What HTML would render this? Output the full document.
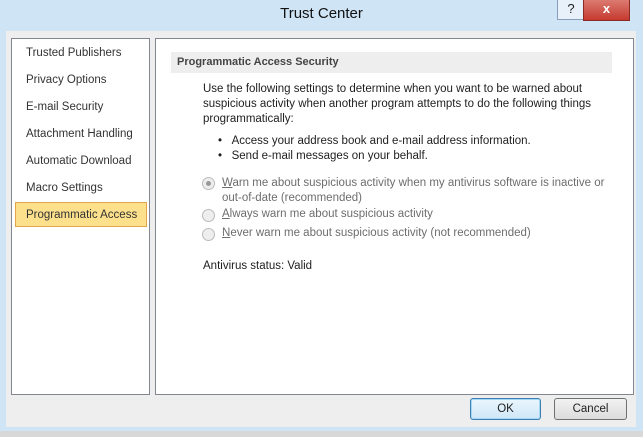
<!DOCTYPE html><html><head><style>
body{margin:0;width:643px;height:437px;overflow:hidden;background:#dcdcdc;font-family:"Liberation Sans",sans-serif;font-size:11.5px;color:#1e1e1e;position:relative}
.a{position:absolute}
</style></head><body>
<div class="a" style="left:0;top:0;width:643px;height:431px;background:#cfe4f5;border-bottom:1px solid #555"></div>
<div class="a" style="left:0;top:431px;width:643px;height:6px;background:#d8d8d8"></div>
<div class="a" style="left:0;top:5px;width:643px;text-align:center;font-size:15px;color:#111">Trust Center</div>
<div class="a" style="left:557px;top:0;width:26px;height:19px;border:1px solid #8aa0b8;border-top:0;background:#e8f1fa;text-align:center;font-size:13px;line-height:18px">?</div>
<div class="a" style="left:583px;top:0;width:45px;height:20px;background:linear-gradient(#dc7a70,#c53a30);border:1px solid #8a2a24;border-top:0;color:#fff;text-align:center;font-weight:bold;font-size:13px;line-height:18px">x</div>
<div class="a" style="left:6px;top:31px;width:630px;height:396px;background:#eeeeee"></div>
<div class="a" style="left:11px;top:38px;width:137px;height:355px;background:#fff;border:1px solid #828790"></div>
<div class="a" style="left:155px;top:38px;width:477px;height:355px;background:#fff;border:1px solid #828790"></div>
<div class="a" style="left:15px;top:202px;width:130px;height:23px;background:#fde08c;border:1px solid #e3a54a"></div>
<div class="a" style="left:26px;top:40px;line-height:27px;color:#333">Trusted Publishers<br>Privacy Options<br>E-mail Security<br>Attachment Handling<br>Automatic Download<br>Macro Settings<br>Programmatic Access</div>
<div class="a" style="left:171px;top:52px;width:441px;height:21px;background:#eeeeee;font-weight:bold;color:#444;line-height:21px;padding-left:6px;box-sizing:border-box;font-size:11px">Programmatic Access Security</div>
<div class="a" style="left:203px;top:82px;line-height:15px">Use the following settings to determine when you want to be warned about<br>suspicious activity when another program attempts to do the following things<br>programmatically:</div>
<div class="a" style="left:218px;top:134px;line-height:15px">•&nbsp;&nbsp;&nbsp;Access your address book and e-mail address information.<br>•&nbsp;&nbsp;&nbsp;Send e-mail messages on your behalf.</div>
<div class="a" style="left:222px;top:176px;line-height:15px;color:#6d6d6d"><u>W</u>arn me about suspicious activity when my antivirus software is inactive or<br>out-of-date (recommended)</div>
<div class="a" style="left:222px;top:208px;color:#6d6d6d"><u>A</u>lways warn me about suspicious activity</div>
<div class="a" style="left:222px;top:227px;color:#6d6d6d"><u>N</u>ever warn me about suspicious activity (not recommended)</div>
<div class="a" style="left:202px;top:177px;width:11px;height:11px;border-radius:50%;border:1px solid #bbb;background:#eee"><div class="a" style="left:3px;top:3px;width:5px;height:5px;border-radius:50%;background:#999"></div></div>
<div class="a" style="left:202px;top:209px;width:11px;height:11px;border-radius:50%;border:1px solid #bbb;background:#eee"></div>
<div class="a" style="left:202px;top:228px;width:11px;height:11px;border-radius:50%;border:1px solid #bbb;background:#eee"></div>
<div class="a" style="left:203px;top:260px">Antivirus status: Valid</div>
<div class="a" style="left:470px;top:398px;width:69px;height:20px;border:1px solid #3c7fb1;border-radius:3px;background:linear-gradient(#eaf6fd,#cfe7f7);text-align:center;line-height:20px;box-shadow:inset 0 0 0 1px #a6d8f5">OK</div>
<div class="a" style="left:554px;top:398px;width:71px;height:20px;border:1px solid #707070;border-radius:3px;background:linear-gradient(#f2f2f2,#dcdcdc);text-align:center;line-height:20px">Cancel</div>
</body></html>
